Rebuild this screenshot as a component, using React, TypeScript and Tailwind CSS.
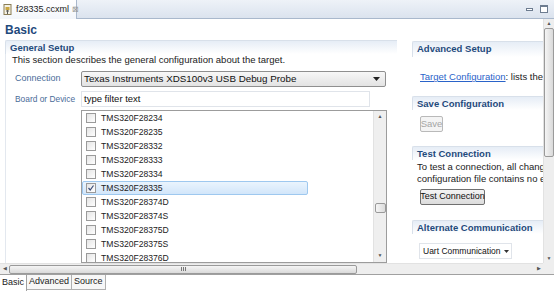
import React from "react";

const devices = [
  "TMS320F28234",
  "TMS320F28235",
  "TMS320F28332",
  "TMS320F28333",
  "TMS320F28334",
  "TMS320F28335",
  "TMS320F28374D",
  "TMS320F28374S",
  "TMS320F28375D",
  "TMS320F28375S",
  "TMS320F28376D",
];

function SectionHeader({ title }: { title: string }) {
  return (
    <div className="h-[14px] shrink-0 border-t border-l border-[#d8e0ea] bg-gradient-to-b from-[#e6edf6] to-white rounded-tl-[2px] flex items-center pl-[4px]">
      <span className="font-bold text-[#1f4a7c] text-[9.5px] leading-none whitespace-nowrap">{title}</span>
    </div>
  );
}

function Checkbox({ checked }: { checked?: boolean }) {
  return (
    <div className="w-[10px] h-[10px] shrink-0 border border-[#9a9a9a] bg-gradient-to-br from-[#e4e4e4] to-white flex items-center justify-center">
      {checked && (
        <svg width="8" height="8" viewBox="0 0 8 8">
          <path d="M1.5 4 L3.2 6 L6.5 1.5" stroke="#3a4d7a" strokeWidth="1.2" fill="none" />
        </svg>
      )}
    </div>
  );
}

function DownArrow() {
  return (
    <svg width="7" height="4" viewBox="0 0 7 4" className="shrink-0">
      <path d="M0 0 L7 0 L3.5 4 Z" fill="#222" />
    </svg>
  );
}

export default function App() {
  return (
    <div
      className="w-[554px] h-[291px] overflow-hidden bg-white flex flex-col text-[9.5px] text-black"
      style={{ fontFamily: '"Liberation Sans", Arial, sans-serif' }}
    >
      {/* top tab bar */}
      <div className="h-[19px] shrink-0 flex bg-gradient-to-b from-[#eef2f8] to-[#dbe3ee] border-b border-[#a9b8cc]">
        <div className="w-[77px] shrink-0 h-[19px] bg-gradient-to-b from-white to-[#f3f6fb] border-r border-[#a9b8cc] flex items-center pl-[3px] whitespace-nowrap">
          <svg width="10" height="12" viewBox="0 0 10 12" className="mr-[3px] shrink-0">
            <rect x="1" y="0.5" width="7" height="10" fill="#f4f1e4" stroke="#8a7d55" />
            <rect x="2.5" y="3" width="4" height="3" fill="#c9a640" />
            <path d="M3 7 h3 M4.5 6 v4" stroke="#5a5a5a" strokeWidth="1" />
          </svg>
          <span className="text-[9px] text-[#222]">f28335.ccxml</span>
          <span className="ml-[3px] text-[8px] text-[#999] leading-none">⊠</span>
        </div>
        <div className="flex-1" />
        <div className="flex items-center gap-[7px] pr-[6px]">
          <div className="w-[7px] h-[3px] border border-[#6d7c90] bg-white" />
          <div className="w-[8px] h-[8px] border border-[#6d7c90] border-t-[2px] bg-white" />
        </div>
      </div>

      {/* main */}
      <div className="flex flex-1 min-h-0">
        <div className="flex-1 min-w-0 overflow-hidden flex flex-col">
          <div className="h-[21px] shrink-0 flex items-center pl-[5px] pt-[1px]">
            <span className="font-bold text-[12px] text-[#1f4a7c]">Basic</span>
          </div>
          <div className="flex flex-1 min-h-0">
            {/* left column */}
            <div className="w-[392px] ml-[5px] shrink-0 flex flex-col">
              <SectionHeader title="General Setup" />
              <div className="border-l border-[#e3e8ef] flex-1 flex flex-col">
                <div className="h-[13px] flex items-center pl-[6px] text-[#222] whitespace-nowrap">
                  This section describes the general configuration about the target.
                </div>
                <div className="flex items-center mt-[4px] h-[16px]">
                  <span className="w-[75px] shrink-0 pl-[9px] text-[#4a6c99] text-[9px] whitespace-nowrap">Connection</span>
                  <div className="w-[305px] h-[16px] border border-[#8f8f8f] rounded-[2px] bg-gradient-to-b from-[#f7f7f7] to-[#e3e3e3] flex items-center pl-[2px] pr-[5px]">
                    <span className="flex-1 text-[#111] text-[9.8px] whitespace-nowrap">Texas Instruments XDS100v3 USB Debug Probe</span>
                    <DownArrow />
                  </div>
                </div>
                <div className="flex items-center mt-[4px] h-[16px]">
                  <span className="w-[75px] shrink-0 pl-[9px] text-[#4a6c99] text-[8.4px] whitespace-nowrap">Board or Device</span>
                  <div className="w-[289px] h-[16px] border border-[#e0e4ea] bg-white flex items-center pl-[2px] text-[#111]">
                    type filter text
                  </div>
                </div>
                <div className="ml-[75px] mt-[3px] w-[306px] h-[153px] border border-[#9c9c9c] flex overflow-hidden">
                  <div className="flex-1 flex flex-col">
                    {devices.map((d, i) => (
                      <div
                        key={d}
                        className={
                          "h-[14px] shrink-0 flex items-center pl-[3px] w-[226px] " +
                          (i === 5
                            ? "bg-gradient-to-b from-[#eaf4fd] to-[#d2e6fa] border border-[#9ec8ef] rounded-[2px]"
                            : "border border-transparent")
                        }
                      >
                        <Checkbox checked={i === 5} />
                        <span className="ml-[5px] text-[#222] text-[8.6px] whitespace-nowrap">{d}</span>
                      </div>
                    ))}
                  </div>
                  <div className="w-[13px] bg-[#efefef] border-l border-[#e2e2e2] flex flex-col items-center">
                    <div className="h-[12px] flex items-center text-[5px] text-[#555]">▲</div>
                    <div className="h-[80px]" />
                    <div className="w-[11px] h-[10px] bg-gradient-to-r from-[#f5f5f5] to-[#dcdcdc] border border-[#9a9a9a] rounded-[2px]" />
                    <div className="flex-1" />
                    <div className="h-[12px] flex items-center text-[5px] text-[#555]">▼</div>
                  </div>
                </div>
              </div>
            </div>

            {/* right column */}
            <div className="w-[200px] ml-[15px] shrink-0 flex flex-col">
              <div className="mt-[1px]">
                <div className="h-[16px] border-t border-l border-[#d8e0ea] bg-gradient-to-b from-[#e6edf6] to-white rounded-tl-[2px] flex items-center pl-[4px]">
                  <span className="font-bold text-[#1f4a7c] text-[9.5px] whitespace-nowrap">Advanced Setup</span>
                </div>
              </div>
              <div className="h-[39px] shrink-0 flex items-center pl-[8px] pt-[2px] whitespace-nowrap">
                <span className="text-[#2a63c9] underline">Target Configuration</span>
                <span className="text-[#222]">: lists the co</span>
              </div>
              <SectionHeader title="Save Configuration" />
              <div className="pl-[8px] pt-[6px] h-[36px] shrink-0">
                <div className="w-[23px] h-[16px] border border-[#b9b9b9] rounded-[2px] bg-[#f4f4f4] text-[#a5a5a5] flex items-center justify-center">
                  Save
                </div>
              </div>
              <SectionHeader title="Test Connection" />
              <div className="pl-[5px] text-[#222] whitespace-nowrap leading-[12px] pt-[1px]">
                <div>To test a connection, all changes</div>
                <div>configuration file contains no erro</div>
              </div>
              <div className="pl-[8px] pt-[4px] h-[35px] shrink-0">
                <div className="w-[65px] h-[16px] border border-[#707070] rounded-[2px] bg-gradient-to-b from-[#f4f4f4] to-[#dcdcdc] text-[#111] text-[9px] flex items-center justify-center whitespace-nowrap">
                  Test Connection
                </div>
              </div>
              <SectionHeader title="Alternate Communication" />
              <div className="pl-[7px] pt-[9px]">
                <div className="w-[93px] h-[16px] border border-[#e0e4ea] bg-white flex items-center pl-[3px] pr-[6px]">
                  <span className="flex-1 text-[#111] text-[8.5px] whitespace-nowrap">Uart Communication</span>
                  <svg width="5" height="3" viewBox="0 0 5 3" className="shrink-0 ml-[4px]">
                    <path d="M0 0 L5 0 L2.5 3 Z" fill="#333" />
                  </svg>
                </div>
              </div>
            </div>
          </div>
        </div>
        {/* vertical scrollbar */}
        <div className="w-[11px] shrink-0 bg-[#eeeeee] border-l border-[#e2e2e2] flex flex-col items-center">
          <div className="h-[9px] flex items-center text-[5px] text-[#555]">▲</div>
          <div className="w-[10px] h-[129px] bg-gradient-to-r from-[#f5f5f5] to-[#d9d9d9] border border-[#9a9a9a] rounded-[2px]" />
          <div className="flex-1" />
          <div className="h-[9px] flex items-center text-[5px] text-[#555]">▼</div>
        </div>
      </div>

      {/* horizontal scrollbar */}
      <div className="h-[11px] shrink-0 flex">
        <div className="flex-1 bg-[#eeeeee] border-t border-[#e2e2e2] flex items-center">
          <div className="w-[9px] flex justify-center text-[5px] text-[#555]">◀</div>
          <div className="w-[348px] h-[9px] bg-gradient-to-b from-[#f5f5f5] to-[#dadada] border border-[#9a9a9a] rounded-[2px] flex items-center justify-center">
            <div className="flex gap-[1px]">
              <div className="w-[1px] h-[4px] bg-[#777]" />
              <div className="w-[1px] h-[4px] bg-[#777]" />
              <div className="w-[1px] h-[4px] bg-[#777]" />
            </div>
          </div>
          <div className="flex-1" />
          <div className="w-[9px] flex justify-center text-[5px] text-[#555]">▶</div>
        </div>
        <div className="w-[11px] bg-[#eeeeee]" />
      </div>

      {/* bottom tabs */}
      <div className="h-[17px] shrink-0 flex border-t border-[#a0a0a0] bg-white text-[9px]">
        <div className="px-[2px] h-[16px] flex items-center bg-white border-r border-[#a0a0a0] text-[#222]">Basic</div>
        <div className="px-[2px] h-[15px] flex items-center bg-[#f7f7f7] border-r border-b border-[#b0b0b0] text-[#222]">Advanced</div>
        <div className="px-[2px] h-[15px] flex items-center bg-[#f7f7f7] border-r border-b border-[#b0b0b0] text-[#222]">Source</div>
      </div>
    </div>
  );
}
